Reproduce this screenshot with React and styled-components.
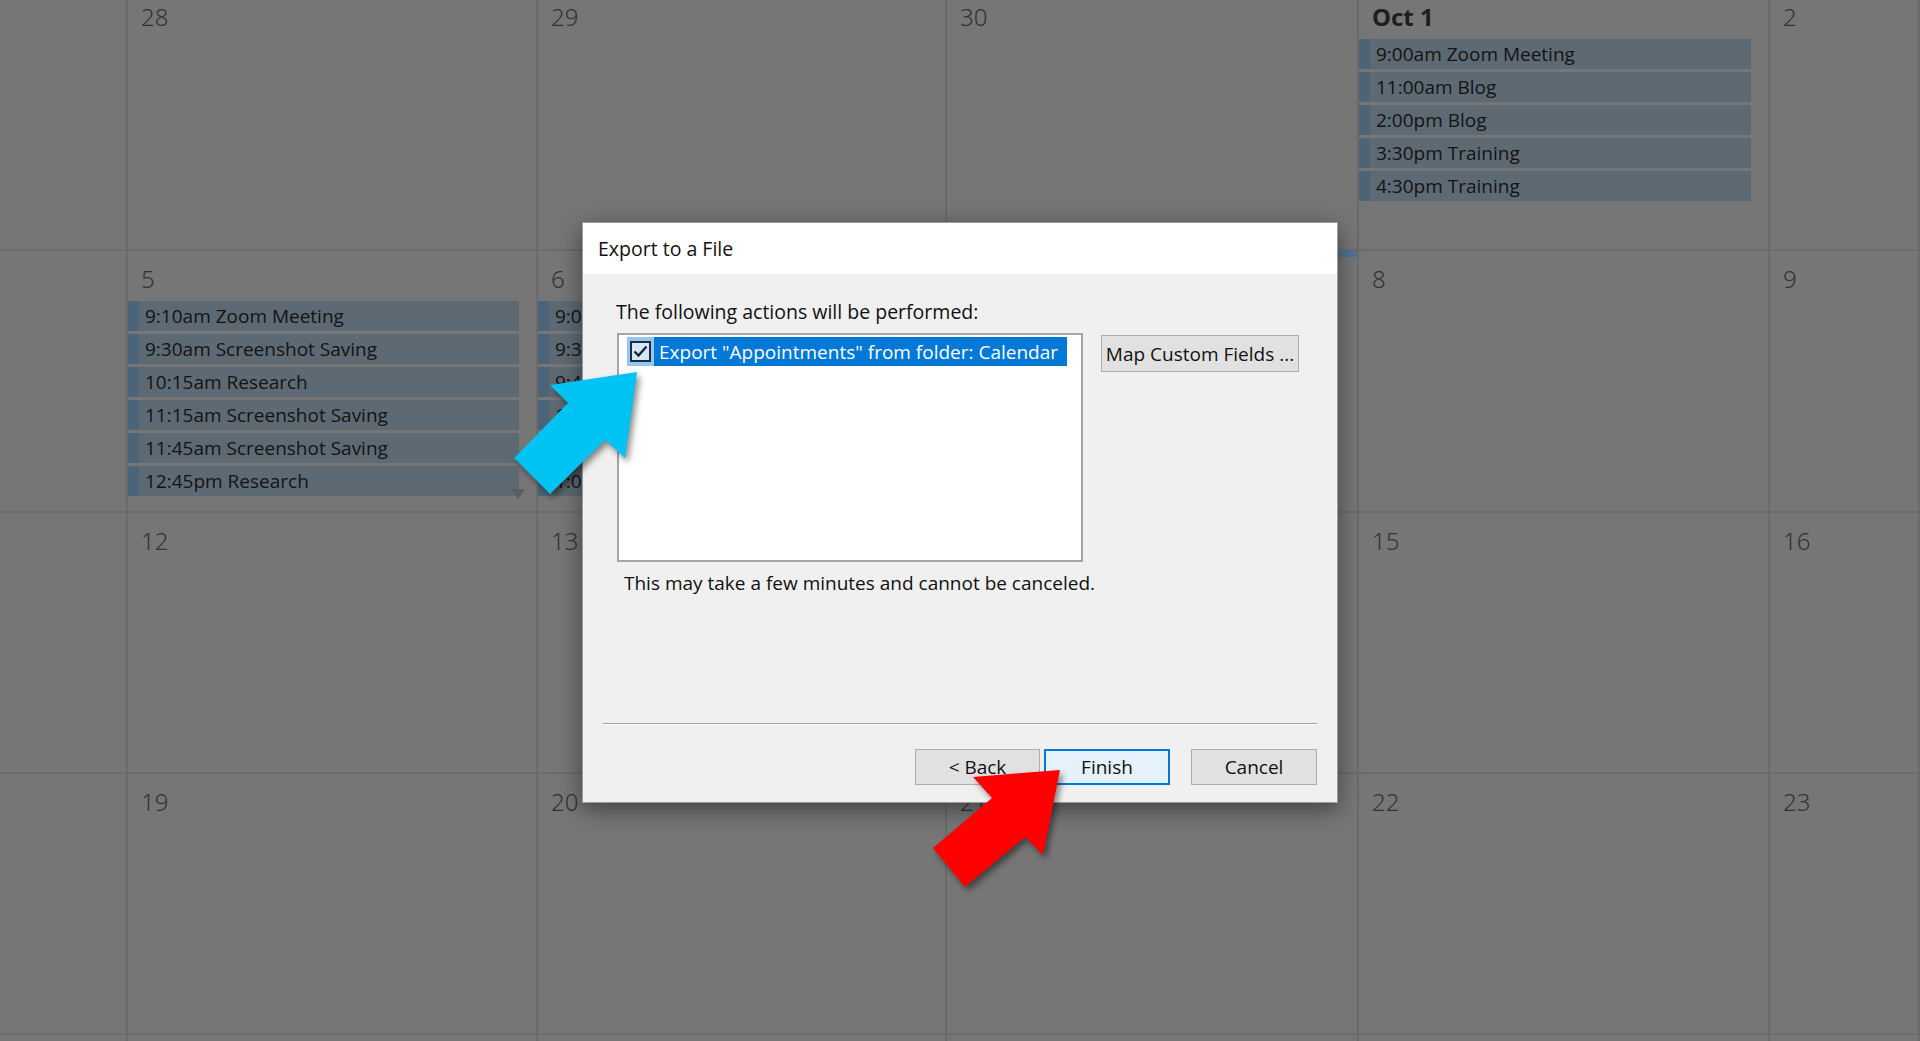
import styled, { createGlobalStyle } from "styled-components"

const GlobalStyle = createGlobalStyle`
  html, body {
    margin: 0;
    padding: 0;
    overflow: hidden;
  }
  body {
    font-family: "Open Sans", "Noto Sans", sans-serif;
    background: #767676;
  }
`

const Page = styled.div`
  position: relative;
  width: 1920px;
  height: 1041px;
  overflow: hidden;
  background: #767676;
`

const Grid = styled.div`
  display: grid;
  grid-template-columns: 128px 410px 409px 412px 411px 1fr;
  grid-template-rows: 262px 262px 261px 261px 261px;
  margin-top: -11px;
`

const Cell = styled.div`
  position: relative;
  min-width: 0;
  border-right: 2px solid #6b6b6b;
  border-bottom: 2px solid #6b6b6b;
  box-shadow: ${p => (p.$today ? "inset 0 6px 0 #4f7394" : "none")};
`

const DayLabel = styled.div`
  box-sizing: border-box;
  height: 50px;
  padding: 14px 0 0 13px;
  font-family: "Noto Sans", "Open Sans", sans-serif;
  font-size: 24px;
  line-height: 28px;
  font-weight: ${p => (p.$bold ? 700 : 300)};
  color: ${p => (p.$bold ? "#1e1e1e" : "#333")};
  white-space: nowrap;
`

const EventList = styled.div`
  display: flex;
  flex-direction: column;
  gap: 3px;
  padding-right: 17px;
`

const Event = styled.div`
  height: 30px;
  display: flex;
  align-items: center;
  background: #5d6a74;
  border-left: 11px solid #4c6478;
  padding-left: 6px;
  font-size: 19px;
  color: #131313;
  white-space: nowrap;
  overflow: hidden;
`

const MoreArrow = styled.div`
  position: absolute;
  right: 11px;
  top: 238px;
  width: 0;
  height: 0;
  border-left: 7px solid transparent;
  border-right: 7px solid transparent;
  border-top: 10px solid #5c5c5c;
`

const Dialog = styled.div`
  position: absolute;
  left: 582px;
  top: 222px;
  width: 756px;
  height: 581px;
  box-sizing: border-box;
  border: 1px solid #9b9b9b;
  background: #f0f0f0;
  display: flex;
  flex-direction: column;
  box-shadow: 0 6px 22px rgba(0, 0, 0, 0.45);
`

const TitleBar = styled.div`
  height: 51px;
  flex-shrink: 0;
  background: #fff;
  display: flex;
  align-items: center;
  padding-left: 15px;
  font-size: 19.5px;
  color: #111;
`

const Body = styled.div`
  flex: 1;
  display: flex;
  flex-direction: column;
  padding: 26px 20px 17px 20px;
  font-size: 19px;
  color: #111;
`

const Content = styled.div`
  padding-left: 14px;
`

const Lead = styled.div`
  line-height: 24px;
  margin-left: -1px;
  font-size: 19.5px;
`

const Row = styled.div`
  display: flex;
  align-items: flex-start;
  margin-top: 9px;
`

const ListBox = styled.div`
  box-sizing: border-box;
  width: 466px;
  height: 229px;
  background: #fff;
  border: 2px solid #a5a5a5;
  padding: 2px 0 0 8px;
`

const ListItem = styled.div`
  display: flex;
  height: 29px;
`

const CheckCell = styled.div`
  width: 27px;
  display: flex;
  align-items: center;
  justify-content: center;
  background: #99c5ec;
`

const CheckBox = styled.div`
  box-sizing: border-box;
  width: 21px;
  height: 21px;
  border: 2px solid #1b2f4d;
  background: #d6e8f8;
  display: flex;
  align-items: center;
  justify-content: center;
`

const Selection = styled.div`
  display: flex;
  align-items: center;
  background: #0078d7;
  color: #fff;
  padding: 0 9px 0 5px;
  white-space: nowrap;
`

const Button = styled.div`
  box-sizing: border-box;
  width: ${p => p.$w || 126}px;
  height: ${p => p.$h || 36}px;
  display: flex;
  align-items: center;
  justify-content: center;
  background: ${p => (p.$primary ? "#e5f1fb" : "#e1e1e1")};
  border: ${p => (p.$primary ? "2px solid #0078d7" : "1px solid #adadad")};
  color: #111;
  white-space: nowrap;
`

const SideButton = styled(Button)`
  margin: 2px 0 0 18px;
`

const Note = styled.div`
  line-height: 24px;
  margin: 9px 0 0 7px;
`

const Spacer = styled.div`
  flex: 1;
`

const Separator = styled.div`
  height: 1px;
  background: #a0a0a0;
  border-bottom: 1px solid #fff;
`

const Footer = styled.div`
  display: flex;
  justify-content: flex-end;
  margin-top: 24px;
`

const Gap = styled.div`
  width: ${p => p.$w}px;
`

const Arrows = styled.svg`
  position: absolute;
  left: 0;
  top: 0;
  pointer-events: none;
  filter: drop-shadow(3px 4px 3px rgba(0, 0, 0, 0.45));
`

const oct1 = ["9:00am Zoom Meeting", "11:00am Blog", "2:00pm Blog", "3:30pm Training", "4:30pm Training"]
const day5 = [
  "9:10am Zoom Meeting",
  "9:30am Screenshot Saving",
  "10:15am Research",
  "11:15am Screenshot Saving",
  "11:45am Screenshot Saving",
  "12:45pm Research",
]
const day6 = [
  "9:00am Zoom Meeting",
  "9:30am Screenshot Saving",
  "9:45am Research",
  "11:15am Screenshot Saving",
  "12:00pm Blog",
  "1:00pm Training",
]

// the last week only shows its top edge, so its days have no visible label
const weeks = [
  [{}, { d: "28" }, { d: "29" }, { d: "30" }, { d: "Oct 1", bold: true, events: oct1 }, { d: "2" }],
  [{}, { d: "5", events: day5, more: true }, { d: "6", events: day6 }, { d: "7", today: true }, { d: "8" }, { d: "9" }],
  [{}, { d: "12" }, { d: "13" }, { d: "14" }, { d: "15" }, { d: "16" }],
  [{}, { d: "19" }, { d: "20" }, { d: "21" }, { d: "22" }, { d: "23" }],
  [{}, {}, {}, {}, {}, {}],
]

const App = () => {
  return (
    <Page>
      <GlobalStyle />
      <Grid>
        {weeks.map((week, wi) =>
          week.map((day, di) => (
            <Cell key={wi + "-" + di} $today={day.today}>
              {day.d && <DayLabel $bold={day.bold}>{day.d}</DayLabel>}
              {day.events && (
                <EventList>
                  {day.events.map(ev => (
                    <Event key={ev}>{ev}</Event>
                  ))}
                </EventList>
              )}
              {day.more && <MoreArrow />}
            </Cell>
          ))
        )}
      </Grid>

      <Dialog>
        <TitleBar>Export to a File</TitleBar>
        <Body>
          <Content>
            <Lead>The following actions will be performed:</Lead>
            <Row>
              <ListBox>
                <ListItem>
                  <CheckCell>
                    <CheckBox>
                      <svg width="15" height="13" viewBox="0 0 15 13">
                        <path d="M1.5 6.5 L5.5 10.5 L13.5 1.5" fill="none" stroke="#13243d" strokeWidth="2.4" />
                      </svg>
                    </CheckBox>
                  </CheckCell>
                  <Selection>Export "Appointments" from folder: Calendar</Selection>
                </ListItem>
              </ListBox>
              <SideButton $w={198} $h={37}>Map Custom Fields ...</SideButton>
            </Row>
            <Note>This may take a few minutes and cannot be canceled.</Note>
          </Content>
          <Spacer />
          <Separator />
          <Footer>
            <Button $w={125}>&lt; Back</Button>
            <Gap $w={4} />
            <Button $primary>Finish</Button>
            <Gap $w={21} />
            <Button>Cancel</Button>
          </Footer>
        </Body>
      </Dialog>

      <Arrows width="1920" height="1041" viewBox="0 0 1920 1041">
        <polygon points="637,372 625,458 605,440 550,494 514,458 568,403 550,385" fill="#00c2f3" />
        <polygon points="1060,770 1043,855 1025,837 965,887 933,848 992,798 973,777" fill="#ff0000" />
      </Arrows>
    </Page>
  )
}

export default App
